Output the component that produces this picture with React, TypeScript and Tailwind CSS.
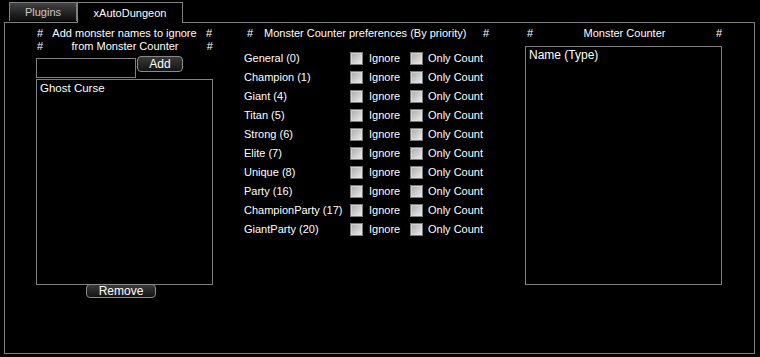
import React from "react";

const rows = [
  "General (0)",
  "Champion (1)",
  "Giant (4)",
  "Titan (5)",
  "Strong (6)",
  "Elite (7)",
  "Unique (8)",
  "Party (16)",
  "ChampionParty (17)",
  "GiantParty (20)",
];

function Check() {
  return (
    <div className="w-[13px] h-[13px] border border-[#7c7c7c] bg-gradient-to-br from-[#a9a9a9] to-[#ededed] shrink-0">
      <div className="w-full h-full border border-[#e4e4e4]/60" />
    </div>
  );
}

function Btn({ label, className }: { label: string; className: string }) {
  return (
    <button
      className={`rounded-[4px] border border-[#8a8a8a] bg-gradient-to-b from-[#3a3a3a] to-[#141414] text-white leading-none flex items-center justify-center ${className}`}
    >
      {label}
    </button>
  );
}

export default function App() {
  return (
    <div
      className="w-[760px] h-[357px] bg-black text-white text-[11px] overflow-hidden"
      style={{ fontFamily: '"Liberation Sans", Arial, sans-serif' }}
    >
      {/* tabs */}
      <div className="flex items-end h-[22px] pl-[9px]">
        <div className="w-[68px] h-[19px] border border-b-0 border-[#808080] bg-gradient-to-b from-[#444] to-[#0c0c0c] text-[#c8c8c8] flex items-center justify-center text-[11px] mb-[1px]">
          Plugins
        </div>
        <div className="w-[106px] h-[21px] border border-b-0 border-[#808080] bg-black text-white flex items-center justify-center relative z-10 -mb-px">
          xAutoDungeon
        </div>
      </div>

      {/* panel */}
      <div className="ml-[4px] w-[751px] h-[332px] border border-[#808080] flex items-start pt-[4px]">
        {/* left column */}
        <div className="ml-[31px] w-[177px] flex flex-col">
          <div className="flex justify-between leading-[13px] pl-[1px] pr-[1px]">
            <span>#</span>
            <span>Add monster names to ignore</span>
            <span>#</span>
          </div>
          <div className="flex justify-between leading-[13px] pl-[1px]">
            <span>#</span>
            <span>from Monster Counter</span>
            <span>#</span>
          </div>
          <div className="flex items-start mt-[5px] gap-[1px]">
            <div className="w-[100px] h-[20px] border border-[#808080] bg-black" />
            <Btn label="Add" className="w-[46px] h-[16px] -mt-[2px] text-[12px]" />
          </div>
          <div className="w-[177px] h-[206px] mt-[1px] border border-[#808080] px-[3px] pt-[1px] leading-[14px] text-[11.5px]">
            Ghost Curse
          </div>
          <Btn label="Remove" className="w-[70px] h-[14px] ml-[50px] -mt-px text-[12px]" />
        </div>

        {/* middle column */}
        <div className="ml-[31px] w-[250px] flex flex-col">
          <div className="flex leading-[13px] pl-[3px]">
            <span className="w-[17px]">#</span>
            <span className="w-[219px]">Monster Counter preferences (By priority)</span>
            <span>#</span>
          </div>
          <div className="flex flex-col mt-[9px]">
            {rows.map((r) => (
              <div key={r} className="flex items-center h-[19px] text-[11px]">
                <span className="w-[106px] whitespace-nowrap">{r}</span>
                <Check />
                <span className="ml-[6px] w-[41px]">Ignore</span>
                <Check />
                <span className="ml-[5px] whitespace-nowrap">Only Count</span>
              </div>
            ))}
          </div>
        </div>

        {/* right column */}
        <div className="ml-[31px] w-[197px] flex flex-col">
          <div className="flex justify-between leading-[13px] pl-[2px] pr-[0px]">
            <span>#</span>
            <span>Monster Counter</span>
            <span>#</span>
          </div>
          <div className="w-[197px] h-[239px] mt-[6px] border border-[#808080] px-[3px] pt-[1px] leading-[14px] text-[12px]">
            Name (Type)
          </div>
        </div>
      </div>
    </div>
  );
}
